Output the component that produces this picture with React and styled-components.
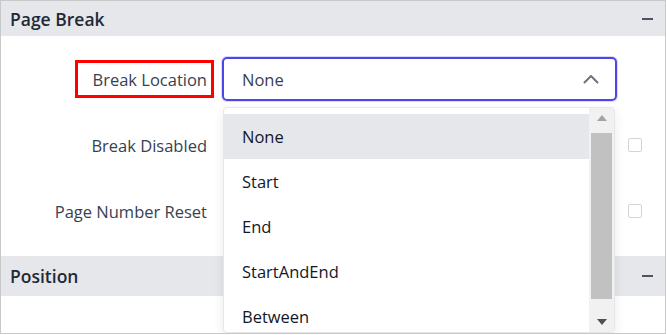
import React from 'react';
import styled, { createGlobalStyle } from 'styled-components';

const GlobalStyle = createGlobalStyle`
  body {
    margin: 0;
    background: #ffffff;
    font-family: "Open Sans", "Noto Sans", sans-serif;
  }
`;

const Panel = styled.div`
  width: 666px;
  height: 334px;
  box-sizing: border-box;
  border: 1px solid #c8c8c8;
  overflow: hidden;
  display: flex;
  flex-direction: column;
`;

const SectionHeader = styled.div`
  height: ${p => p.height}px;
  flex: none;
  background: #e5e7eb;
  display: flex;
  align-items: center;
  justify-content: space-between;
  padding: 0 12px 0 9px;
`;

const Title = styled.span`
  font-size: 17.5px;
  font-weight: 600;
  color: #1f2937;
`;

const Minus = styled.span`
  width: 11px;
  height: 2px;
  background: #4b5563;
`;

const Body = styled.div`
  display: grid;
  grid-template-columns: 213px 420px;
  grid-auto-rows: 44px;
  column-gap: 8px;
  row-gap: 22px;
  padding: 21px 0 23px;
`;

const Label = styled.div`
  justify-self: end;
  align-self: center;
  font-size: 16.5px;
  color: #374151;
  border: 3px solid ${p => (p.marked ? '#ff0000' : 'transparent')};
  padding: 7px 4px 6px 15px;
  line-height: 19px;
  white-space: nowrap;
`;

const Control = styled.div`
  position: relative;
  display: flex;
  align-items: center;
  justify-content: ${p => (p.end ? 'flex-end' : 'flex-start')};
`;

const Select = styled.div`
  width: 395px;
  height: 44px;
  box-sizing: border-box;
  border: 2px solid #4f46e5;
  border-radius: 5px;
  box-shadow: 0 0 0 1px rgba(99, 102, 241, 0.25);
  display: flex;
  align-items: center;
  justify-content: space-between;
  padding: 0 16px 0 18px;
  font-size: 16.5px;
  color: #374151;
`;

const Menu = styled.div`
  position: absolute;
  top: 50px;
  left: 1px;
  width: 392px;
  height: 226px;
  box-sizing: border-box;
  background: #ffffff;
  border: 1px solid #e5e7eb;
  border-radius: 4px;
  box-shadow: 0 4px 12px rgba(0, 0, 0, 0.08);
  display: flex;
  overflow: hidden;
  z-index: 2;
`;

const List = styled.div`
  flex: 1;
  padding-top: 6px;
`;

const Item = styled.div`
  height: 45px;
  display: flex;
  align-items: center;
  padding-left: 18px;
  font-size: 16.5px;
  color: #111827;
  background: ${p => (p.active ? '#e5e7eb' : 'transparent')};
`;

const Scrollbar = styled.div`
  width: 25px;
  background: #f1f1f1;
  display: flex;
  flex-direction: column;
`;

const ArrowBtn = styled.div`
  height: 20px;
  flex: none;
  display: flex;
  align-items: center;
  justify-content: center;
`;

const Triangle = styled.span`
  width: 0;
  height: 0;
  border-left: 5.5px solid transparent;
  border-right: 5.5px solid transparent;
  ${p =>
    p.up
      ? 'border-bottom: 6px solid #a3a3a3;'
      : 'border-top: 6px solid #505050;'}
`;

const Track = styled.div`
  flex: 1;
  padding: 5px 2px 0;
`;

const Thumb = styled.div`
  height: 166px;
  background: #c1c1c1;
`;

const Checkbox = styled.span`
  width: 14px;
  height: 14px;
  box-sizing: border-box;
  border: 1px solid #d1d5db;
  border-radius: 2px;
  background: #ffffff;
`;

const ChevronUp = () => (
  <svg width="16" height="10" viewBox="0 0 16 10" fill="none">
    <path d="M1.5 8.5L8 2l6.5 6.5" stroke="#6b7280" strokeWidth="2" strokeLinecap="round" strokeLinejoin="round" />
  </svg>
);

const options = ['None', 'Start', 'End', 'StartAndEnd', 'Between'];

export default function App() {
  return (
    <>
      <GlobalStyle />
      <Panel>
        <SectionHeader height={35}>
          <Title>Page Break</Title>
          <Minus />
        </SectionHeader>
        <Body>
          <Label marked>Break Location</Label>
          <Control>
            <Select>
              <span>None</span>
              <ChevronUp />
            </Select>
            <Menu>
              <List>
                {options.map(o => (
                  <Item key={o} active={o === 'None'}>{o}</Item>
                ))}
              </List>
              <Scrollbar>
                <ArrowBtn><Triangle up /></ArrowBtn>
                <Track><Thumb /></Track>
                <ArrowBtn><Triangle /></ArrowBtn>
              </Scrollbar>
            </Menu>
          </Control>
          <Label>Break Disabled</Label>
          <Control end>
            <Checkbox />
          </Control>
          <Label>Page Number Reset</Label>
          <Control end>
            <Checkbox />
          </Control>
        </Body>
        <SectionHeader height={40}>
          <Title>Position</Title>
          <Minus />
        </SectionHeader>
      </Panel>
    </>
  );
}
